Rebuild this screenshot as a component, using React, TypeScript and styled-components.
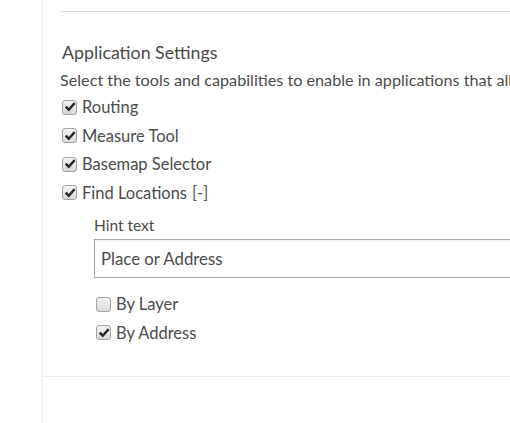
import React from "react"
import styled, { createGlobalStyle } from "styled-components"

const GlobalStyle = createGlobalStyle`
  html, body {
    margin: 0;
    padding: 0;
    background: #fff;
    overflow: hidden;
  }
  body {
    font-family: Lato, "Noto Sans", "Liberation Sans", sans-serif;
    color: #4c4c4c;
  }
`

// Heavy check glyph used inside the checked boxes
const CheckMark = () => (
  <svg width="12" height="12" viewBox="0 0 12 12">
    <path d="M0.8 6.6 L2.7 4.8 L4.8 6.9 L9.7 1.2 L11.5 3 L4.8 10.6 Z" fill="#262626" />
  </svg>
)

const CheckRow = (props: any) => {
  const { label, checked, extra } = props
  return (
    <Row>
      <Box $checked={checked}>{checked && <CheckMark />}</Box>
      <RowLabel>
        {label}
        {extra && <Toggle>{extra}</Toggle>}
      </RowLabel>
    </Row>
  )
}

const App = () => {
  return (
    <Page>
      <GlobalStyle />
      <Gutter />
      <Main>
        <TopRule />
        <Panel>
          <Title>Application Settings</Title>
          <Description>
            Select the tools and capabilities to enable in applications that allow users to customize the map
          </Description>
          <CheckList>
            <CheckRow label="Routing" checked />
            <CheckRow label="Measure Tool" checked />
            <CheckRow label="Basemap Selector" checked />
            <CheckRow label="Find Locations" checked extra="[-]" />
          </CheckList>
          <SubPanel>
            <HintLabel>Hint text</HintLabel>
            <HintInput defaultValue="Place or Address" />
            <SubList>
              <CheckRow label="By Layer" />
              <CheckRow label="By Address" checked />
            </SubList>
          </SubPanel>
        </Panel>
        <BottomRule />
      </Main>
    </Page>
  )
}

const Page = styled.div`
  display: flex;
  width: 510px;
  height: 423px;
  overflow: hidden;
`

const Gutter = styled.div`
  width: 42px;
  flex-shrink: 0;
`

const Main = styled.div`
  flex: 1;
  border-left: 1px solid #ececec;
  min-width: 0;
  overflow: hidden;
`

const TopRule = styled.div`
  margin: 11px 0 0 17px;
  border-top: 1px solid #dcdcdc;
`

const Panel = styled.div`
  padding: 28px 0 0 17px;
  white-space: nowrap;
`

const Title = styled.div`
  font-size: 17.8px;
  line-height: 24px;
  padding-left: 2px;
  color: #4a4a4a;
`

const Description = styled.div`
  font-size: 16.2px;
  line-height: 22px;
  margin-top: 5px;
`

const CheckList = styled.div`
  display: flex;
  flex-direction: column;
  margin-top: 2px;
`

const Row = styled.div`
  display: flex;
  align-items: center;
  height: 28.5px;
  padding-left: 2px;
`

const Box = styled.span<{ $checked?: boolean }>`
  width: 15px;
  height: 15px;
  box-sizing: border-box;
  border: 1px solid #a3a3a3;
  border-radius: 3px;
  background: linear-gradient(#f3f3f3, #d9d9d9);
  display: flex;
  align-items: center;
  justify-content: center;
  margin-right: 5px;
  flex-shrink: 0;
`

const RowLabel = styled.span`
  font-size: 16.5px;
`

const Toggle = styled.span`
  margin-left: 5px;
  color: #5a5a5a;
`

const SubPanel = styled.div`
  padding-left: 34px;
  margin-top: 8px;
`

const HintLabel = styled.div`
  font-size: 15.5px;
  line-height: 20px;
`

const HintInput = styled.input`
  display: block;
  box-sizing: border-box;
  width: 500px;
  height: 39px;
  margin-top: 4px;
  padding: 0 6px;
  border: 1px solid #a9a9a9;
  box-shadow: inset 0 1px 2px rgba(0, 0, 0, 0.08);
  font-family: inherit;
  font-size: 16.8px;
  color: #4c4c4c;
  outline: none;
`

const SubList = styled.div`
  display: flex;
  flex-direction: column;
  margin-top: 12px;
  margin-bottom: 29px;
`

const BottomRule = styled.div`
  border-top: 1px solid #ececec;
`

export default App
